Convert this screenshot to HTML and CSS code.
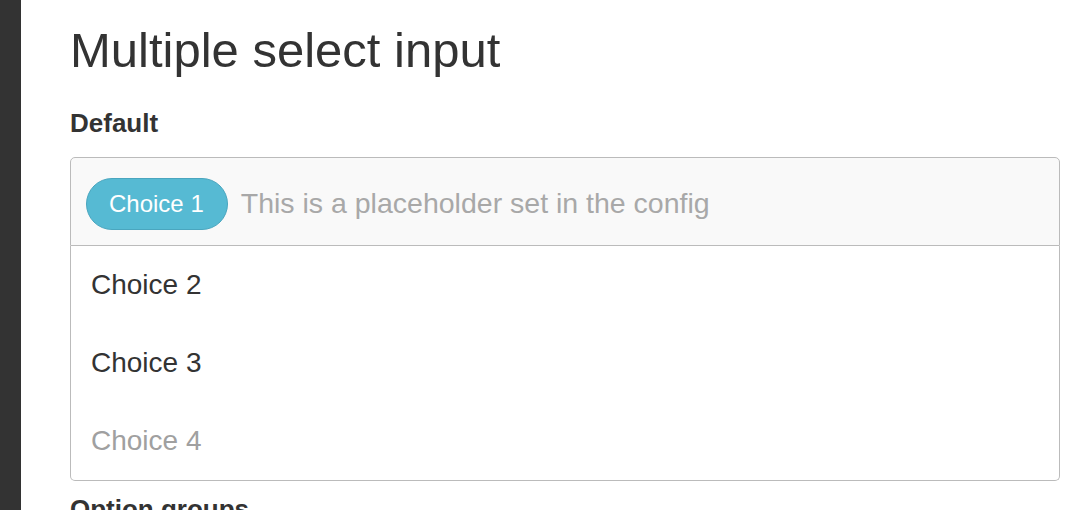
FILE: index.html
```html
<!DOCTYPE html>
<html>
<head>
<meta charset="utf-8">
<link rel="stylesheet" href="styles.css">
</head>
<body>
<div class="layout">
  <aside class="sidebar"></aside>
  <main class="content">
    <h1 class="title">Multiple select input</h1>
    <label class="field-label">Default</label>
    <div class="choices">
      <div class="choices-inner">
        <span class="pill">Choice 1</span>
        <span class="placeholder">This is a placeholder set in the config</span>
      </div>
      <ul class="dropdown">
        <li class="item">Choice 2</li>
        <li class="item">Choice 3</li>
        <li class="item is-disabled">Choice 4</li>
      </ul>
    </div>
    <label class="field-label">Option groups</label>
  </main>
</div>
</body>
</html>
```
FILE: styles.css
```css
* { box-sizing: border-box; }
html, body { margin: 0; padding: 0; background: #fff; }
body {
  font-family: "Liberation Sans", Arial, sans-serif;
  color: #333;
  height: 510px;
  overflow: hidden;
}
.layout { display: flex; height: 510px; }
.sidebar { width: 21px; flex: none; background: #333; }
.content { flex: 1; padding: 0 16px 0 49px; }
.title {
  margin: 22px 0 0;
  font-size: 49px;
  font-weight: 400;
  line-height: 56px;
  color: #333;
}
.field-label {
  display: block;
  margin-top: 30px;
  font-size: 26px;
  font-weight: 700;
  line-height: 30px;
  color: #333;
}
.choices { margin-top: 19px; }
.choices-inner {
  display: flex;
  align-items: center;
  height: 89px;
  padding: 19px 15px 15px;
  background: #f9f9f9;
  border: 1px solid #bbb;
  border-radius: 5px 5px 0 0;
}
.pill {
  display: inline-flex;
  align-items: center;
  height: 52px;
  padding: 0 23px 0 22px;
  border: 1px solid #4aa6bf;
  border-radius: 26px;
  background: #56bad3;
  color: #fff;
  font-size: 24px;
}
.placeholder {
  margin-left: 13px;
  font-size: 28.5px;
  color: #a8a8a8;
}
.dropdown {
  list-style: none;
  margin: 0;
  padding: 0;
  border: 1px solid #bbb;
  border-top: none;
  border-radius: 0 0 5px 5px;
  background: #fff;
}
.item {
  padding: 20px 20px;
  font-size: 28px;
  line-height: 38px;
  color: #333;
}
.item.is-disabled { color: #a0a0a0; }
.choices + .field-label { margin-top: 13px; }
```
